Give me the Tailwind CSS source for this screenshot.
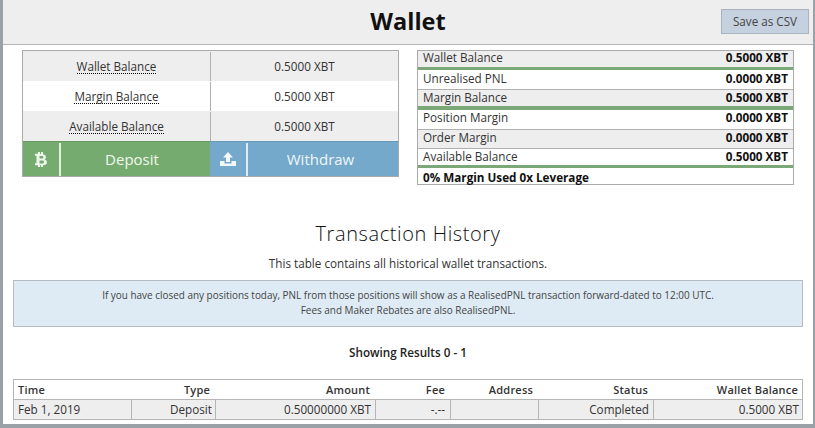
<!DOCTYPE html>
<html lang="en">
<head>
    <meta charset="UTF-8">
    <title>Wallet</title>
    <script src="https://cdn.jsdelivr.net/npm/@tailwindcss/browser@4"></script>
</head>
<body class="h-[428px] w-[815px] overflow-hidden bg-[#9aa1a7] font-['Open_Sans',sans-serif] text-[#333]">
    <main class="ml-[3px] mr-[2px] h-[424px] bg-white overflow-hidden">
        <!-- Title bar -->
        <header class="relative h-[45px] bg-[#eeeeee] border-b border-[#b5b5b5] flex items-center justify-center">
            <h1 class="text-[23.5px] font-bold text-[#111] leading-none pb-[1px]">Wallet</h1>
            <button class="absolute right-[4px] top-[9px] w-[88px] h-[25px] bg-[#c6d1df] border border-[#aab4bf] text-[11.7px] text-[#444]">Save as CSV</button>
        </header>

        <!-- Balances -->
        <section class="flex items-start pt-[5px] pl-[19px]">
            <div class="w-[377px] border border-[#aaaaaa] text-[11.7px] mr-[18px]">
                <div class="grid grid-cols-[188px_187px] h-[30px] bg-[#eeeeee] pt-[1px]">
                    <div class="flex items-center justify-center border-r border-[#b0b0b0]"><span class="border-b border-dotted border-black leading-[14px]">Wallet Balance</span></div>
                    <div class="flex items-center justify-center">0.5000 XBT</div>
                </div>
                <div class="grid grid-cols-[188px_187px] h-[30px] bg-white pt-[1px]">
                    <div class="flex items-center justify-center border-r border-[#b0b0b0]"><span class="border-b border-dotted border-black leading-[14px]">Margin Balance</span></div>
                    <div class="flex items-center justify-center">0.5000 XBT</div>
                </div>
                <div class="grid grid-cols-[188px_187px] h-[30px] bg-[#eeeeee] pt-[1px]">
                    <div class="flex items-center justify-center border-r border-[#b0b0b0]"><span class="border-b border-dotted border-black leading-[14px]">Available Balance</span></div>
                    <div class="flex items-center justify-center">0.5000 XBT</div>
                </div>
                <div class="grid grid-cols-[187px_188px] h-[35px] text-white text-[15px]">
                    <div class="flex items-center bg-[#75ab6e] border-t border-[#6a9a64]">
                        <div class="w-[38px] h-[33px] border-r-2 border-[#dff0dc] flex items-center justify-center pr-[1px]">
                            <svg width="12" height="15" viewBox="0 0 12 15" fill="#eef6ec"><path d="M3 0h2v2h1V0h2v2.200c2 .4 3 1.500 3 3 0 1-.5 1.800-1.400 2.200C11 7.900 12 8.900 12 10.300c0 1.900-1.400 2.900-4 3V15H6v-1.700H5V15H3v-1.700H0v-2h1.500V3.800H0v-2h3V0zm1.500 3.900v2.600h2.300c1 0 1.500-.5 1.500-1.300s-.5-1.300-1.500-1.300H4.500zm0 4.500v3h2.700c1.200 0 1.800-.6 1.800-1.500s-.6-1.500-1.800-1.500H4.500z"/></svg>
                        </div>
                        <span class="flex-1 text-center text-[#f2f8f0] pr-[7px]">Deposit</span>
                    </div>
                    <div class="flex items-center bg-[#74a9cb] border-t border-[#6a9ab8]">
                        <div class="w-[38px] h-[33px] border-r-2 border-[#dcebf4] flex items-center justify-center pr-[1px]">
                            <svg width="16" height="14" viewBox="0 0 16 14" fill="#f2f7fb"><path d="M8 0l5 5.500H10V10H6V5.500H3L8 0z"/><path d="M0 9h4.500v2.500h7V9H16v5H0z"/></svg>
                        </div>
                        <span class="flex-1 text-center text-[#f0f6fa] pr-[5px]">Withdraw</span>
                    </div>
                </div>
            </div>

            <div class="w-[377px] border border-[#aaaaaa] text-[11.7px] leading-none">
                <div class="h-[16px] bg-[#eeeeee] flex justify-between items-center px-[5px] pb-[2px]"><span>Wallet Balance</span><b class="text-[#111]">0.5000 XBT</b></div>
                <div class="h-[3px] bg-[#7ba877]"></div>
                <div class="h-[20px] bg-white border-b border-[#b0b0b0] flex justify-between items-center px-[5px] pb-[2px]"><span>Unrealised PNL</span><b class="text-[#111]">0.0000 XBT</b></div>
                <div class="h-[16px] bg-[#eeeeee] flex justify-between items-center px-[5px]"><span>Margin Balance</span><b class="text-[#111]">0.5000 XBT</b></div>
                <div class="h-[4px] bg-[#7ba877]"></div>
                <div class="h-[20px] bg-white border-b border-[#b0b0b0] flex justify-between items-center px-[5px] pb-[3px]"><span>Position Margin</span><b class="text-[#111]">0.0000 XBT</b></div>
                <div class="h-[19px] bg-[#eeeeee] border-b border-[#b0b0b0] flex justify-between items-center px-[5px] pb-[2px]"><span>Order Margin</span><b class="text-[#111]">0.0000 XBT</b></div>
                <div class="h-[16px] bg-white flex justify-between items-center px-[5px]"><span>Available Balance</span><b class="text-[#111]">0.5000 XBT</b></div>
                <div class="h-[3px] bg-[#7ba877]"></div>
                <div class="h-[16px] bg-white flex items-center px-[5px] pt-[4px] font-bold text-[#111]">0% Margin Used 0x Leverage</div>
            </div>
        </section>

        <!-- History -->
        <section class="pl-[10px] pr-[10px]">
            <h2 class="mt-[35px] text-center text-[20px] leading-[28px] font-light tracking-[0.6px] text-[#111]">Transaction History</h2>
            <p class="mt-[7px] text-center text-[11.7px] leading-[16px]">This table contains all historical wallet transactions.</p>
            <div class="mt-[9px] h-[47px] bg-[#deebf5] border border-[#b5bcc2] flex flex-col justify-center items-center pb-[2px] text-[9.95px] leading-[15px] text-[#444]">
                <p>If you have closed any positions today, PNL from those positions will show as a RealisedPNL transaction forward-dated to 12:00 UTC.</p>
                <p>Fees and Maker Rebates are also RealisedPNL.</p>
            </div>
            <p class="mt-[16px] text-center text-[11.7px] leading-[18px] font-semibold text-[#222]">Showing Results 0 - 1</p>

            <div class="mt-[18px] border border-[#b5b5b5] text-[11.7px]">
                <div class="grid grid-cols-[118px_84px_160px_75px_88px_115px_1fr] h-[20px] items-center border-b border-[#b5b5b5] pt-[1px] font-semibold text-[11px] text-[#333] tracking-[0.2px]">
                    <div class="pl-[4px]">Time</div>
                    <div class="text-right pr-[6px]">Type</div>
                    <div class="text-right pr-[6px]">Amount</div>
                    <div class="text-right pr-[6px]">Fee</div>
                    <div class="text-right pr-[6px]">Address</div>
                    <div class="text-right pr-[6px]">Status</div>
                    <div class="text-right pr-[4px]">Wallet Balance</div>
                </div>
                <div class="grid grid-cols-[118px_84px_160px_75px_88px_115px_1fr] h-[19px] bg-[#eeeeee] leading-[18px]">
                    <div class="pl-[4px] border-r border-[#b5b5b5]">Feb 1, 2019</div>
                    <div class="text-right pr-[3px] border-r border-[#b5b5b5]">Deposit</div>
                    <div class="text-right pr-[4px] border-r border-[#b5b5b5]">0.50000000 XBT</div>
                    <div class="text-right pr-[5px] border-r border-[#b5b5b5]">-.--</div>
                    <div class="border-r border-[#b5b5b5]"></div>
                    <div class="text-right pr-[4px] border-r border-[#b5b5b5]">Completed</div>
                    <div class="text-right pr-[3px]">0.5000 XBT</div>
                </div>
            </div>
        </section>
    </main>
</body>
</html>
